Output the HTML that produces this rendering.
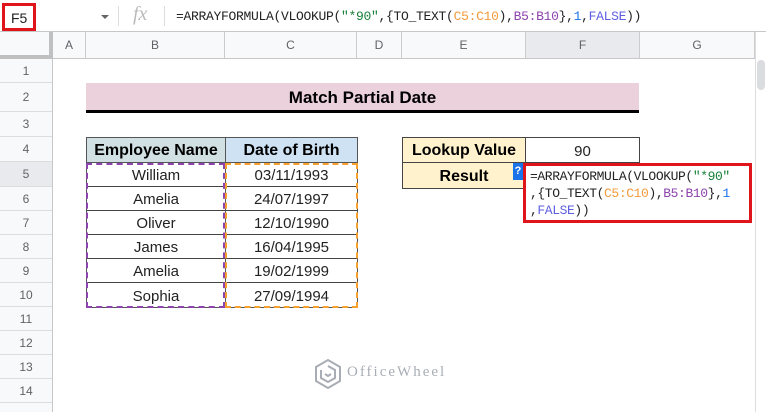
<!DOCTYPE html>
<html><head><meta charset="utf-8"><style>
*{margin:0;padding:0;box-sizing:border-box}
body{width:766px;height:412px;overflow:hidden;background:#fff;font-family:"Liberation Sans",Arial,sans-serif;position:relative}
.a{position:absolute}
.mono{font-family:"Liberation Mono",monospace}
.hdr{background:#f8f9fa;color:#5f6368;font-size:12px;text-align:center}
.c{position:absolute;display:flex;align-items:center;justify-content:center;font-size:15px;color:#222;padding-top:2px}
</style></head><body>
<div class="a" style="left:0;top:0;width:766px;height:32px;background:#fff;border-bottom:1px solid #c7c7c7"></div>
<div class="a" style="left:2px;top:3px;width:34px;height:28px;border:3px solid #e0141b;font-size:14px;padding:4px 0 0 6px;color:#222">F5</div>
<div class="a" style="left:101px;top:15px;width:0;height:0;border-left:4px solid transparent;border-right:4px solid transparent;border-top:4px solid #666"></div>
<div class="a" style="left:118px;top:6px;width:1px;height:20px;background:#ddd"></div>
<div class="a" style="left:133px;top:3px;font-family:'Liberation Serif',serif;font-style:italic;color:#bbb;font-size:20px">fx</div>
<div class="a" style="left:164px;top:6px;width:1px;height:20px;background:#ddd"></div>
<div class="a mono" style="left:176px;top:9px;font-size:13px;color:#222;letter-spacing:-0.3px;white-space:nowrap">=ARRAYFORMULA(VLOOKUP(<span style="color:#188038">"*90"</span>,{TO_TEXT(<span style="color:#f29b3c">C5:C10</span>),<span style="color:#8e44ad">B5:B10</span>},<span style="color:#1a73e8">1</span>,<span style="color:#5e5ee0">FALSE</span>))</div>
<div class="a hdr" style="left:0;top:32px;width:755px;height:27px;border-bottom:1px solid #c7c7c7"></div>
<div class="a" style="left:0;top:32px;width:53px;height:27px;background:#f8f9fa;border-right:4px solid #c0c0c0;border-bottom:4px solid #c0c0c0"></div>
<div class="a hdr" style="left:53px;top:32px;width:33px;height:26px;line-height:26px;border-right:1px solid #ccc">A</div>
<div class="a hdr" style="left:86px;top:32px;width:139px;height:26px;line-height:26px;border-right:1px solid #ccc">B</div>
<div class="a hdr" style="left:225px;top:32px;width:132px;height:26px;line-height:26px;border-right:1px solid #ccc">C</div>
<div class="a hdr" style="left:357px;top:32px;width:45px;height:26px;line-height:26px;border-right:1px solid #ccc">D</div>
<div class="a hdr" style="left:402px;top:32px;width:124px;height:26px;line-height:26px;border-right:1px solid #ccc">E</div>
<div class="a hdr" style="left:526px;top:32px;width:114px;height:26px;line-height:26px;border-right:1px solid #ccc;background:#e8eaed">F</div>
<div class="a hdr" style="left:640px;top:32px;width:115px;height:26px;line-height:26px;border-right:1px solid #ccc">G</div>
<div class="a" style="left:755px;top:32px;width:11px;height:380px;background:#fff;border-left:1px solid #ddd"></div>
<div class="a" style="left:757px;top:60px;width:8px;height:30px;background:#dadce0;border-radius:4px"></div>
<div class="a" style="left:0;top:59px;width:53px;height:353px;background:#f8f9fa;border-right:1px solid #c7c7c7"></div>
<div class="a hdr" style="left:0;top:59px;width:52px;height:24px;line-height:24px;border-bottom:1px solid #ddd">1</div>
<div class="a hdr" style="left:0;top:83px;width:52px;height:29px;line-height:29px;border-bottom:1px solid #ddd">2</div>
<div class="a hdr" style="left:0;top:112px;width:52px;height:25px;line-height:25px;border-bottom:1px solid #ddd">3</div>
<div class="a hdr" style="left:0;top:137px;width:52px;height:25px;line-height:25px;border-bottom:1px solid #ddd">4</div>
<div class="a hdr" style="left:0;top:162px;width:52px;height:25px;line-height:25px;border-bottom:1px solid #ddd;background:#e8eaed">5</div>
<div class="a hdr" style="left:0;top:187px;width:52px;height:24px;line-height:24px;border-bottom:1px solid #ddd">6</div>
<div class="a hdr" style="left:0;top:211px;width:52px;height:24px;line-height:24px;border-bottom:1px solid #ddd">7</div>
<div class="a hdr" style="left:0;top:235px;width:52px;height:24px;line-height:24px;border-bottom:1px solid #ddd">8</div>
<div class="a hdr" style="left:0;top:259px;width:52px;height:24px;line-height:24px;border-bottom:1px solid #ddd">9</div>
<div class="a hdr" style="left:0;top:283px;width:52px;height:24px;line-height:24px;border-bottom:1px solid #ddd">10</div>
<div class="a hdr" style="left:0;top:307px;width:52px;height:24px;line-height:24px;border-bottom:1px solid #ddd">11</div>
<div class="a hdr" style="left:0;top:331px;width:52px;height:24px;line-height:24px;border-bottom:1px solid #ddd">12</div>
<div class="a hdr" style="left:0;top:355px;width:52px;height:24px;line-height:24px;border-bottom:1px solid #ddd">13</div>
<div class="a hdr" style="left:0;top:379px;width:52px;height:24px;line-height:24px;border-bottom:1px solid #ddd">14</div>
<div class="c" style="left:86px;top:83px;width:553px;height:30px;background:#ead1dc;border-bottom:3px solid #000;font-weight:bold;font-size:17px;color:#000">Match Partial Date</div>
<div class="c" style="left:86px;top:137px;width:140px;height:26px;background:#d0e0e3;border:1px solid #555;font-weight:bold;font-size:16px;color:#000">Employee Name</div>
<div class="c" style="left:225px;top:137px;width:133px;height:26px;background:#cfe2f3;border:1px solid #555;font-weight:bold;font-size:16px;color:#000">Date of Birth</div>
<div class="a" style="left:86px;top:162px;width:140px;height:146px;border:1px solid #555"></div>
<div class="a" style="left:225px;top:162px;width:133px;height:146px;border:1px solid #555"></div>
<div class="c" style="left:86px;top:162px;width:140px;height:25px;border-bottom:1px solid #444">William</div>
<div class="c" style="left:86px;top:187px;width:140px;height:24px;border-bottom:1px solid #444">Amelia</div>
<div class="c" style="left:86px;top:211px;width:140px;height:24px;border-bottom:1px solid #444">Oliver</div>
<div class="c" style="left:86px;top:235px;width:140px;height:24px;border-bottom:1px solid #444">James</div>
<div class="c" style="left:86px;top:259px;width:140px;height:24px;border-bottom:1px solid #444">Amelia</div>
<div class="c" style="left:86px;top:283px;width:140px;height:24px">Sophia</div>
<div class="c" style="left:225px;top:162px;width:133px;height:25px;border-bottom:1px solid #444">03/11/1993</div>
<div class="c" style="left:225px;top:187px;width:133px;height:24px;border-bottom:1px solid #444">24/07/1997</div>
<div class="c" style="left:225px;top:211px;width:133px;height:24px;border-bottom:1px solid #444">12/10/1990</div>
<div class="c" style="left:225px;top:235px;width:133px;height:24px;border-bottom:1px solid #444">16/04/1995</div>
<div class="c" style="left:225px;top:259px;width:133px;height:24px;border-bottom:1px solid #444">19/02/1999</div>
<div class="c" style="left:225px;top:283px;width:133px;height:24px">27/09/1994</div>
<div class="a" style="left:86px;top:163px;width:139px;height:145px;border:2px dashed #8e44ad"></div>
<div class="a" style="left:225px;top:163px;width:133px;height:145px;border:2px dashed #f6a02d"></div>
<div class="c" style="left:402px;top:137px;width:124px;height:26px;background:#fff2cc;border:1px solid #444;font-weight:bold;font-size:16px;color:#000">Lookup Value</div>
<div class="c" style="left:525px;top:137px;width:115px;height:26px;border:1px solid #444">90</div>
<div class="c" style="left:402px;top:162px;width:124px;height:27px;background:#fff2cc;border:1px solid #444;font-weight:bold;font-size:16px;color:#000">Result</div>
<div class="a" style="left:525px;top:162px;width:115px;height:27px;border:1px solid #444"></div>
<div class="a" style="left:513px;top:163px;width:10px;height:17px;background:#1a73e8;color:#fff;font-size:11px;font-weight:bold;text-align:center;line-height:17px">?</div>
<div class="a mono" style="left:523px;top:163px;width:229px;height:60px;background:#fff;border:3px solid #e0141b;font-size:13px;line-height:17px;padding:2px 0 0 4px;color:#222;letter-spacing:-0.4px;white-space:nowrap">=ARRAYFORMULA(VLOOKUP(<span style="color:#188038">"*90"</span><br>,{TO_TEXT(<span style="color:#f29b3c">C5:C10</span>),<span style="color:#8e44ad">B5:B10</span>},<span style="color:#1a73e8">1</span><br>,<span style="color:#5e5ee0">FALSE</span>))</div>
<svg class="a" style="left:313px;top:358px" width="30" height="32" viewBox="0 0 30 32"><g fill="none" stroke="#a9adb5" stroke-width="2"><path d="M15 2 L27 9 L27 23 L15 30 L3 23 L3 9 Z"/><path d="M15 8 L22 12 L22 20 L15 24 L8 20 L8 12"/><path d="M12 16 L15 18 L18 16"/></g></svg>
<div class="a" style="left:347px;top:364px;font-family:'Liberation Serif',serif;font-size:15px;color:#a9adb5;letter-spacing:2px">OfficeWheel</div>
</body></html>
